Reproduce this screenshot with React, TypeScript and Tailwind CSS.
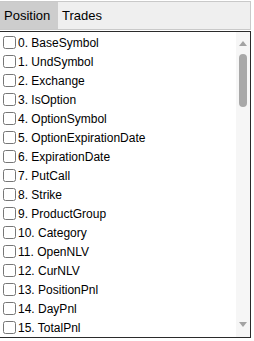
import { useState } from "react";

const fields = [
  "BaseSymbol",
  "UndSymbol",
  "Exchange",
  "IsOption",
  "OptionSymbol",
  "OptionExpirationDate",
  "ExpirationDate",
  "PutCall",
  "Strike",
  "ProductGroup",
  "Category",
  "OpenNLV",
  "CurNLV",
  "PositionPnl",
  "DayPnl",
  "TotalPnl",
];

export default function App() {
  const [tab, setTab] = useState("Position");
  const [checked, setChecked] = useState<Record<number, boolean>>({});

  return (
    <div className="w-[251px] h-[338px] bg-white font-['Liberation_Sans',Arial,sans-serif] text-black flex flex-col">
      <div className="mt-px h-[29px] flex border-t border-b border-r border-[#c9c9c9] bg-[#efefef] text-[13px] shrink-0">
        <button
          onClick={() => setTab("Position")}
          className={`w-[58px] pl-[4px] text-left ${tab === "Position" ? "bg-[#cdcdcd]" : ""}`}
        >
          Position
        </button>
        <button
          onClick={() => setTab("Trades")}
          className={`pl-[4px] pr-[6px] text-left ${tab === "Trades" ? "bg-[#cdcdcd]" : ""}`}
        >
          Trades
        </button>
      </div>
      <div className="mt-px flex-1 min-h-0 flex border-t border-r border-b border-[#2b2b2b]">
        <div className="flex-1 min-w-0 overflow-hidden pt-px">
          {fields.map((f, i) => (
            <label key={i} className="flex items-center h-[19px] text-[12px] pl-[3px] gap-[2px]">
              <input
                type="checkbox"
                className="w-[13px] h-[13px] m-0"
                checked={!!checked[i]}
                onChange={() => setChecked({ ...checked, [i]: !checked[i] })}
              />
              <span>
                {i}. {f}
              </span>
            </label>
          ))}
        </div>
        {/* scrollbar */}
        <div className="w-[14px] bg-[#f6f6f6] flex flex-col items-center pt-[9px] pb-[10px]">
          <svg width="8" height="5" viewBox="0 0 8 5">
            <path d="M4 0 L8 5 L0 5 Z" fill="#a3a3a3" />
          </svg>
          <div className="mt-[8px] w-[8px] h-[53px] rounded-full bg-[#a8a8a8]" />
          <div className="flex-1" />
          <svg width="8" height="5" viewBox="0 0 8 5">
            <path d="M0 0 L8 0 L4 5 Z" fill="#a3a3a3" />
          </svg>
        </div>
      </div>
    </div>
  );
}
